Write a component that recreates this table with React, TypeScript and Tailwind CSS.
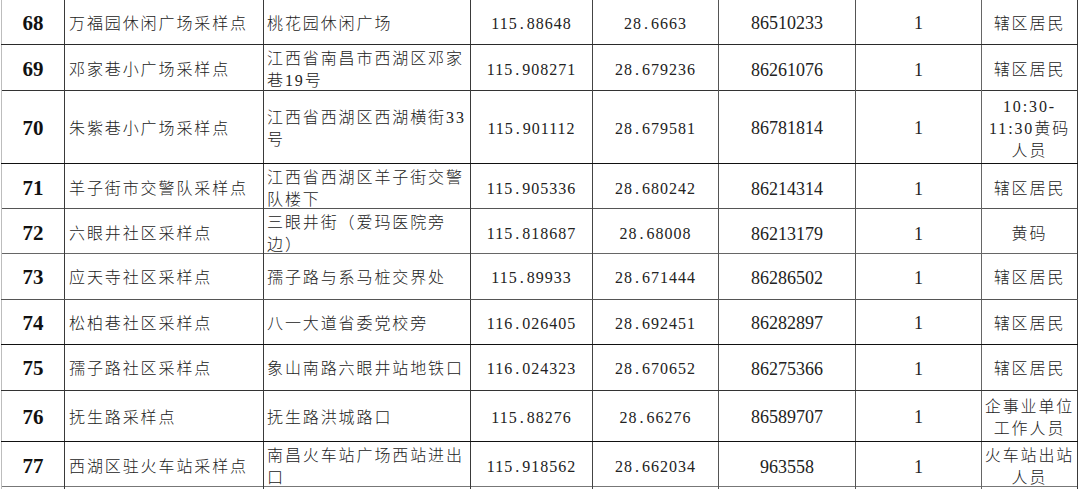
import React from "react";

type Row = {
  no: string;
  name: string;
  addr: string[];
  lng: string;
  lat: string;
  phone: string;
  count: string;
  scope: string[];
  h: string;
  line: string;
};

const rows: Row[] = [
  { no: "68", name: "万福园休闲广场采样点", addr: ["桃花园休闲广场"], lng: "115.88648", lat: "28.6663", phone: "86510233", count: "1", scope: ["辖区居民"], h: "h-[45px]", line: "border-b-[#2a2a2a]" },
  { no: "69", name: "邓家巷小广场采样点", addr: ["江西省南昌市西湖区邓家", "巷19号"], lng: "115.908271", lat: "28.679236", phone: "86261076", count: "1", scope: ["辖区居民"], h: "h-[46px]", line: "border-b-[#333333]" },
  { no: "70", name: "朱紫巷小广场采样点", addr: ["江西省西湖区西湖横街33", "号"], lng: "115.901112", lat: "28.679581", phone: "86781814", count: "1", scope: ["10:30-", "11:30黄码", "人员"], h: "h-[73px]", line: "border-b-[#111111]" },
  { no: "71", name: "羊子街市交警队采样点", addr: ["江西省西湖区羊子街交警", "队楼下"], lng: "115.905336", lat: "28.680242", phone: "86214314", count: "1", scope: ["辖区居民"], h: "h-[45px]", line: "border-b-[#555555]" },
  { no: "72", name: "六眼井社区采样点", addr: ["三眼井街（爱玛医院旁", "边）"], lng: "115.818687", lat: "28.68008", phone: "86213179", count: "1", scope: ["黄码"], h: "h-[45px]", line: "border-b-[#666666]" },
  { no: "73", name: "应天寺社区采样点", addr: ["孺子路与系马桩交界处"], lng: "115.89933", lat: "28.671444", phone: "86286502", count: "1", scope: ["辖区居民"], h: "h-[46px]", line: "border-b-[#555555]" },
  { no: "74", name: "松柏巷社区采样点", addr: ["八一大道省委党校旁"], lng: "116.026405", lat: "28.692451", phone: "86282897", count: "1", scope: ["辖区居民"], h: "h-[45px]", line: "border-b-[#111111]" },
  { no: "75", name: "孺子路社区采样点", addr: ["象山南路六眼井站地铁口"], lng: "116.024323", lat: "28.670652", phone: "86275366", count: "1", scope: ["辖区居民"], h: "h-[46px]", line: "border-b-[#333333]" },
  { no: "76", name: "抚生路采样点", addr: ["抚生路洪城路口"], lng: "115.88276", lat: "28.66276", phone: "86589707", count: "1", scope: ["企事业单位", "工作人员"], h: "h-[51px]", line: "border-b-[#111111]" },
  { no: "77", name: "西湖区驻火车站采样点", addr: ["南昌火车站广场西站进出", "口"], lng: "115.918562", lat: "28.662034", phone: "963558", count: "1", scope: ["火车站出站", "人员"], h: "h-[45px]", line: "border-b-[#777777]" },
];

const cjk = "font-['Liberation_Serif','Noto_Sans_CJK_SC',serif] font-light text-[16px] tracking-[1.9px] leading-[22px] text-[#222]";

// the source uses a wide, SimSun-like full stop between the digits
const Coord: React.FC<{ value: string }> = ({ value }) => {
  const [a, b] = value.split(".");
  return (
    <span className="whitespace-nowrap">
      {a}
      <span className="mx-[2px]">.</span>
      {b}
    </span>
  );
};

const App: React.FC = () => {
  return (
    <div className="min-h-screen w-[1080px] bg-white">
      <div className="ml-[1px] flex w-[1077px] flex-col">
        {rows.map((r) => (
          <div key={r.no} className={`grid grid-cols-[64px_199px_207px_122px_126px_137px_126px_96px] border-b ${r.line} ${r.h}`}>
            {/* 序号 */}
            <div className="flex items-center justify-center border-l border-r border-l-[#bdbdbd] border-r-[#3a3a3a] pt-[3px] font-['Liberation_Serif',serif] text-[21px] font-bold text-[#111]">
              {r.no}
            </div>
            {/* 采样点名称 */}
            <div className={`flex items-center border-r border-r-[#3a3a3a] pl-[4px] pt-[3px] ${cjk}`}>
              {r.name}
            </div>
            {/* 地址 */}
            <div className={`flex flex-col justify-center border-r border-r-[#3a3a3a] pl-[3px] pt-[3px] ${cjk}`}>
              {r.addr.map((l) => (
                <span key={l} className="whitespace-nowrap">{l}</span>
              ))}
            </div>
            {/* 经度 */}
            <div className="flex items-center justify-center border-r border-r-[#444] pt-[3px] font-['Liberation_Serif',serif] text-[16px] tracking-[1px] text-[#222]">
              <Coord value={r.lng} />
            </div>
            {/* 纬度 */}
            <div className="flex items-center justify-center border-r border-r-[#555] pt-[3px] font-['Liberation_Serif',serif] text-[16px] tracking-[1px] text-[#222]">
              <Coord value={r.lat} />
            </div>
            {/* 电话 */}
            <div className="flex items-center justify-center border-r border-r-[#555] pt-[3px] font-['Liberation_Serif',serif] text-[18px] text-[#222]">
              {r.phone}
            </div>
            {/* 数量 */}
            <div className="flex items-center justify-center border-r border-r-[#666] pt-[3px] font-['Liberation_Serif',serif] text-[18px] text-[#222]">
              {r.count}
            </div>
            {/* 服务对象 */}
            <div className={`flex flex-col items-center justify-center border-r border-r-[#3a3a3a] pt-[3px] text-center ${cjk}`}>
              {r.scope.map((l) => (
                <span key={l} className="whitespace-nowrap">{l}</span>
              ))}
            </div>
          </div>
        ))}
      </div>
    </div>
  );
};

export default App;
